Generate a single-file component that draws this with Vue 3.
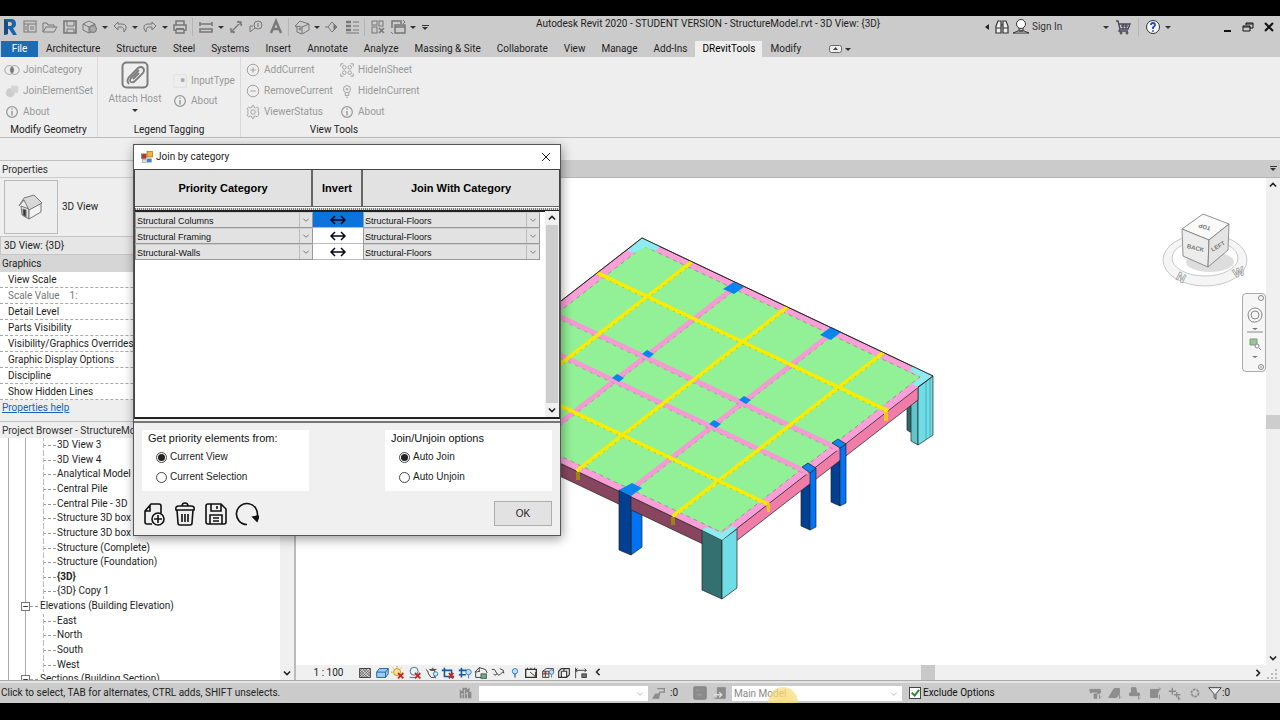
<script setup>
import { h, ref } from 'vue'

const art = {
  revit: '<path d="M3 1h7q5 0 5 5 0 3-3 4l4 7h-4l-4-6H7v5l-4 1z" fill="#1d63a8" stroke="none"/><path d="M7 4h2q2 0 2 2t-2 2H7z" fill="#cbcbcb" stroke="none"/><path d="M3 1l4 3v12l-4 1z" fill="#164b86" stroke="none"/>',
  home: '<rect x="3" y="3" width="12" height="11"/><path d="M3 6h12M7 6v8M9 9h4M9 11h4M5 8v4"/>',
  open: '<path d="M2 14V5h4l1 2h6v2M2 14l3-5h11l-3 5z"/>',
  save: '<path d="M3 3h12v12H3z" stroke-width="1.6"/><path d="M6 3v5h7V3M6 15v-4h7v4"/>',
  sync: '<path d="M2 6l6-3 6 3v6l-6 3-6-3zM2 6l6 3 6-3M8 9v6"/><circle cx="12" cy="11" r="3.5" fill="#aaa"/>',
  undo: '<path d="M7 4L3 8l4 4v-3h3q3 0 3 5 3-3 2-6-1-2-4-2H7z"/>',
  redo: '<path d="M11 4l4 4-4 4v-3H8q-3 0-3 5-3-3-2-6 1-2 4-2h4z"/>',
  print: '<path d="M5 7V3h8v4M3 12V7h12v5h-2v3H5v-3z" stroke-width="1.5"/><path d="M5 11h8" stroke-width="2"/>',
  measure: '<path d="M3 6h12M3 4v4M15 4v4M3 11h12v3H3z" stroke-width="1.6"/>',
  dim: '<path d="M4 14L14 4M3 11l4 4M11 3l4 4M10 4h4v4M4 10v4h4" stroke-width="1.3"/>',
  tag: '<circle cx="11" cy="7" r="4"/><path d="M11 5v4M3 14V8h3M3 14l5-4"/>',
  text: '<path d="M4 15L9 3l5 12M6 11h6" stroke-width="2.4"/>',
  house: '<path d="M2 8l5-5 9 3v6l-7 4-5-2V9zM9 9v7M2 8l7 1 7-3"/><circle cx="7" cy="11" r="1"/>',
  section: '<path d="M9 4l5 5-5 5-4-5z"/><path d="M11 6l3 3-3 3z" fill="#777"/><path d="M2 9h3"/>',
  thin: '<path d="M3 4h5M3 8h5M3 12h5" stroke-width="2.6"/><path d="M10 4h6M10 8h6M10 12h6M3 15h13"/>',
  close: '<rect x="3" y="3" width="5" height="4"/><rect x="10" y="3" width="4" height="5"/><rect x="3" y="9" width="5" height="6"/><path d="M10 10l5 5M15 10l-5 5" stroke-width="1.6"/>',
  switch: '<path d="M3 10V3h9v3M6 7h10v8H6zM6 9h10" stroke-width="1.5"/><path d="M14 2l2 2-2 2M4 16l-2-2"/>',
  joincat: '<circle cx="6" cy="9" r="5"/><circle cx="12" cy="9" r="5"/><path d="M9 5q4 4 0 8-4-4 0-8z" fill="#777" stroke="none"/>',
  joinset: '<circle cx="7" cy="11" r="5" fill="#ccc" stroke="none"/><rect x="8" y="3" width="8" height="8" fill="#d4d4d4" stroke="none"/>',
  info: '<circle cx="9" cy="9" r="6" stroke-width="1.4"/><path d="M9 8v5M9 5v1.500" stroke-width="1.6"/>',
  input: '<rect x="2" y="2" width="14" height="14" stroke="#ddd"/><rect x="10" y="6" width="4" height="4" fill="#aaa" stroke="none"/>',
  plus: '<circle cx="9" cy="9" r="6.500"/><path d="M9 6v6M6 9h6"/>',
  minus: '<circle cx="9" cy="9" r="6.500"/><path d="M6 9h6"/>',
  gear: '<circle cx="9" cy="9" r="2.500"/><path d="M8 2h2l.5 2 1.500.6L14 3.600 15.500 5l-1 2 .5 2 .5 2-.5 2-1.400 1.400-2-1-1.500.6L10 16H8l-.5-2L6 13.400l-2 1L2.500 13l1-2L3 9l.5-2-1-2L4 3.600l2 1L7.500 4z"/>',
  hide: '<circle cx="6" cy="6" r="2"/><circle cx="12" cy="6" r="2"/><circle cx="6" cy="12" r="2"/><circle cx="12" cy="12" r="2"/><path d="M2 5V2h3M13 2h3v3M2 13v3h3M13 16h3v-3"/>',
  bulb: '<circle cx="9" cy="7" r="4"/><circle cx="9" cy="7" r="1"/><path d="M7 11v3h4v-3M8 16h2"/>',
  search: '<path d="M3 15V8l2-5h3v12zM10 15V3h3l2 5v7zM8 7h2M3 10h5M10 10h5" stroke="#333" fill="#eee" stroke-width="1.200"/>',
  user: '<path d="M1 15l5-2h6l5 2z" fill="#eee"/><circle cx="9" cy="6" r="4.500" fill="#fff"/><path d="M7 10v3h4v-3"/>',
  cart: '<path d="M2 3h2l2 8h8l2-5H5M6 11l-1 2h9" fill="none" stroke="#4a4766" stroke-width="1.400"/><circle cx="7" cy="15" r="1"/><circle cx="13" cy="15" r="1"/><path d="M7 8h7M9 6v5M12 6v5"/>',
  help: '<circle cx="9" cy="9" r="6.500" fill="#f4f6fb"/><path d="M7 7q0-2 2-2t2 2q0 1-2 2.500V11M9 12.200v1.500" stroke="#2746b8" stroke-width="1.800"/>',
  vDetail: '<rect x="3" y="4" width="12" height="10" fill="#ddd"/><path d="M3 7l3-3M3 10l6-6M3 13l9-9M5 14L15 4M8 14l7-7M11 14l4-4M3 11l3 3M3 8l6 6M3 5l9 9M6 4l9 9M9 4l6 6" stroke-width=".6"/>',
  vStyle: '<path d="M3 8l3-4h10v6l-3 4H3z" fill="#9ccdf2" stroke="#175a9c"/><path d="M3 8h10v6M13 8l3-4" stroke="#175a9c"/>',
  vSun: '<circle cx="8" cy="8" r="4" fill="#ffe28a" stroke="#d08a10"/><path d="M8 1v2M1 8h2M3 3l1 1M13 3l-1 1" stroke="#d08a10"/><path d="M9 9l6 6M15 9l-6 6" stroke="#c8261c" stroke-width="2"/>',
  vShadow: '<circle cx="8" cy="7" r="4.500" fill="#e8f0fa" stroke="#39679c"/><path d="M3 14h7" stroke="#39679c"/><path d="M9 9l6 6M15 9l-6 6" stroke="#c8261c" stroke-width="2"/>',
  vRender: '<path d="M2 5q3 1 3 5l3 4h4V6H7M6 5h8M10 3v2"/><circle cx="13" cy="10" r="2.500" fill="#cfe8ff" stroke="#3277bb"/><path d="M13 13v2" stroke="#3277bb"/>',
  vCrop: '<path d="M5 3v10h11M2 6h11v9" stroke="#175a9c" stroke-width="1.800"/><path d="M10 9l5 6M15 9l-5 6" stroke="#c8261c" stroke-width="2"/>',
  vCropShow: '<path d="M5 3v11M2 6h9M2 11h8" stroke="#175a9c" stroke-width="1.800"/><circle cx="13" cy="8" r="3" fill="#bfe0ff" stroke="#3277bb"/><path d="M13 11v4" stroke="#3277bb"/>',
  vLock: '<path d="M2 8l5-5 7 2 2 4M3 8v6h6M7 3v4M3 8l5-1"/><rect x="9" y="10" width="6" height="5" fill="#79a884" stroke="#355d3e"/>',
  vGlasses: '<path d="M2 5h3l3 5q2 3 4 0 2-3 4-1M8 10q-3 3-4 0M11 4l4 2v3"/>',
  vReveal: '<circle cx="9" cy="7" r="3" fill="#bfe0ff" stroke="#3277bb"/><path d="M9 10v4" stroke="#3277bb" stroke-width="1.600"/>',
  vWork: '<path d="M3 5h12v9H3z" stroke-width="1.500"/><path d="M5 3v2M9 3v2M13 3v2M8 8l6 5M14 8v5"/>',
  vAnalysis: '<path d="M3 7l4-3h8v3M3 7v7h7V7zM6 7v7M3 10h7" /><path d="M3 14h7M4 9h4" stroke="#c8261c"/><circle cx="13" cy="8" r="2.500" fill="#bfe0ff" stroke="#3277bb"/><path d="M13 11v3" stroke="#3277bb"/>',
  vHigh: '<path d="M3 7l3-3h9v7l-3 3H3zM6 7h6v7M6 7v7M9 4v3" stroke-width="1.300"/>',
  vConstr: '<path d="M3 3v12M3 6h12M13 4l2 2-2 2M5 4L3 6l2 2"/><rect x="10" y="10" width="5" height="4" fill="#777"/>',
  sWork: '<path d="M3 15V7l3 2V4h3v4l3-3v10M6 15v-4M9 15v-5M14 15V8" stroke-width="2"/>',
  sEdit: '<path d="M7 4h8v4h-5l-1 4" stroke-width="1.500"/><path d="M2 15l3-5h4v5z" fill="#8e8e8e"/>',
  sSet: '<rect x="2" y="2" width="14" height="14" rx="1" fill="#8b8b8b" stroke="#808080"/><path d="M5 6h2M6 11h5" stroke="#aaa"/>',
  sOpt: '<path d="M6 3h9v12H6z" fill="#8b8b8b"/><path d="M2 11h9M8 8l3 3-3 3" stroke="#ddd" stroke-width="1.500"/><path d="M2 15h7"/>',
  f1: '<path d="M3 5h12v4l-3 1v-2H6L4 9zM8 10h3v5H8z" fill="#8e8e8e"/><path d="M14 11v4l2-2" />',
  f2: '<path d="M2 14L8 4h6v5l-3 5z" fill="#8e8e8e"/><path d="M14 10v5l2-2"/>',
  f3: '<path d="M5 3h5l1 6h3v3H3V9h2z" fill="#8e8e8e"/><path d="M13 12v4l2-2"/>',
  f4: '<path d="M4 5h10l-2 4v5H4z" fill="#8e8e8e"/><path d="M13 3l3 2M14 11v5"/>',
  f5: '<path d="M6 3v8M2 7h8M11 8v6M8 11h7M13 13v3l2-1" stroke-width="1.500"/>',
  f6: '<circle cx="9" cy="9" r="4" stroke-width="2" stroke-dasharray="3 1"/>',
  filter: '<path d="M2 3h14l-6 7v6l-2-2v-4z" fill="#eee" stroke="#333"/>',
  winform: '<rect x="2" y="5" width="6" height="6" fill="#b5382c" stroke="#8c6a66" stroke-width=".8"/><rect x="9" y="2" width="7" height="7" fill="#f2b62e" stroke="#8a6412" stroke-width=".8"/><rect x="9" y="11" width="6" height="5" fill="#4a80cf" stroke="none"/><rect x="3" y="12" width="5" height="4" fill="#ddd" stroke="#999" stroke-width=".8"/>',
  chev: '<path d="M5 7l4 4 4-4"/>',
  arrow: '<path d="M5 7l4 4 4-4" stroke-width="2"/>',
  x: '<path d="M3 3l12 12M15 3L3 15" stroke-width="1.500"/>'
}
const Icon = (p) => h('svg', { viewBox: '0 0 18 18', width: p.size || 18, height: p.size || 18, class: 'ic', 'aria-hidden': 'true', innerHTML: art[p.name] })
Icon.props = ['name', 'size']

const quick = ['revit', 'home', 'open', 'save', 'sync', '▾', 'undo', '▾', 'redo', '▾', 'print', '|', 'measure', '▾', 'dim', 'tag', 'text', '|', 'house', '▾', 'section', 'thin', '|', 'close', 'switch', '▾']
const tabs = ['Architecture', 'Structure', 'Steel', 'Systems', 'Insert', 'Annotate', 'Analyze', 'Massing & Site', 'Collaborate', 'View', 'Manage', 'Add-Ins', 'DRevitTools', 'Modify']
const viewTools = [['plus', 'AddCurrent'], ['hide', 'HideInSheet'], ['minus', 'RemoveCurrent'], ['bulb', 'HideInCurrent'], ['gear', 'ViewerStatus'], ['info', 'About']]
const properties = ['View Scale', 'Scale Value    1:', 'Detail Level', 'Parts Visibility', 'Visibility/Graphics Overrides', 'Graphic Display Options', 'Discipline', 'Show Hidden Lines']
const tree = ['3D View 3', '3D View 4', 'Analytical Model', 'Central Pile', 'Central Pile - 3D', 'Structure 3D box', 'Structure 3D box Wall', 'Structure (Complete)', 'Structure (Foundation)', '{3D}', '{3D} Copy 1', '-Elevations (Building Elevation)', 'East', 'North', 'South', 'West', '-Sections (Building Section)']
const viewIcons = ['vDetail', 'vStyle', 'vSun', 'vShadow', 'vRender', 'vCrop', 'vCropShow', 'vLock', 'vGlasses', 'vReveal', 'vWork', 'vAnalysis', 'vHigh', 'vConstr']
const pairs = [['Structural Columns', 'Structural-Floors'], ['Structural Framing', 'Structural-Floors'], ['Structural-Walls', 'Structural-Floors']]
const source = ref('view')
const mode = ref('join')

// Slab plane: u runs from the back corner to the right one, v from the back corner to the left one.
const at = (u, v) => [642 + 291 * u - 211 * v, 238 + 138 * u + 164 * v]
const poly = (...uv) => uv.map(([u, v]) => at(u, v).map(Math.round).join(',')).join(' ')
const alongU = (v) => ({ a: at(0, v), b: at(1, v) })
const alongV = (u) => ({ a: at(u, 0), b: at(u, 1) })
const slab = poly([0, 0], [1, 0], [1, 1], [0, 1])
const panel = poly([0.026, 0.028], [0.976, 0.028], [0.976, 0.972], [0.026, 0.972])
const girders = [alongV(0.333), alongV(0.667), alongU(0.445), alongU(0.59)]
const joists = [alongV(0.172), alongV(0.5), alongV(0.83), alongU(0.213), alongU(0.782)]
const nodes = [[648, 354], [618, 378], [745, 400], [715, 424]]
</script>

<template>
  <div class="app">
    <header class="titlebar">
      <div class="quick">
        <template v-for="(q, i) in quick" :key="i">
          <span v-if="q === '▾'" class="caret"></span>
          <span v-else-if="q === '|'" class="sep"></span>
          <button v-else class="slot" :aria-label="q"><Icon :name="q" /></button>
        </template>
        <span class="caret more"></span>
      </div>
      <div class="title">Autodesk Revit 2020 - STUDENT VERSION - StructureModel.rvt - 3D View: {3D}</div>
      <div class="account">
        <span class="caret-left"></span>
        <button class="slot" aria-label="Search"><Icon name="search" /></button>
        <button class="signin"><Icon name="user" />Sign In</button>
        <span class="caret"></span>
        <button class="slot cart" aria-label="App store"><Icon name="cart" /></button>
        <span class="sep wide"></span>
        <button class="slot" aria-label="Help"><Icon name="help" /></button>
        <span class="caret"></span>
      </div>
      <div class="winbtns">
        <button aria-label="Minimize"><svg width="12" height="12"><path d="M3 10h7" stroke="#111" stroke-width="2" /></svg></button>
        <button aria-label="Restore"><svg width="12" height="12" fill="none" stroke="#111"><path d="M4 4V2h7v5H8M1 5h7v5H1zM1 6h7M4 3h7" /></svg></button>
        <button aria-label="Close"><svg width="12" height="12"><path d="M2 2l8 8M10 2l-8 8" stroke="#111" stroke-width="2" /></svg></button>
      </div>
    </header>

    <nav class="tabs">
      <button class="file">File</button>
      <button v-for="t in tabs" :key="t" :class="{ on: t === 'DRevitTools' }">{{ t }}</button>
      <span class="toggle"><svg width="14" height="9"><rect x=".5" y=".5" width="12" height="7" rx="2" fill="#eee" stroke="#666" /><path d="M4 5l2.500-3L9 5z" fill="#444" /></svg></span>
      <span class="caret"></span>
    </nav>

    <section class="ribbon">
      <div class="group modify">
        <div class="rows">
          <button><Icon name="joincat" size="16" />JoinCategory</button>
          <button><Icon name="joinset" size="16" />JoinElementSet</button>
          <button><Icon name="info" size="16" />About</button>
        </div>
        <h2>Modify Geometry</h2>
      </div>
      <div class="group legend">
        <div class="pair">
          <button class="attach">
            <svg width="28" height="28" viewBox="0 0 28 28" fill="none" stroke="#7d7d7d"><rect x="1.500" y="1.500" width="25" height="25" rx="4" stroke-width="2" /><path d="M18 9l-8 8q-2 3 0 4t4-1l8-8q2-3 0-5t-5 0l-9 9q-3 4 0 7M12 18l6-6" stroke-width="1.800" /></svg>
            <span>Attach Host</span><i class="caret"></i>
          </button>
          <div class="rows two">
            <button><Icon name="input" size="16" />InputType</button>
            <button><Icon name="info" size="16" />About</button>
          </div>
        </div>
        <h2>Legend Tagging</h2>
      </div>
      <div class="group viewtools">
        <div class="rows cols">
          <button v-for="[ic, t] in viewTools" :key="t"><Icon :name="ic" size="16" />{{ t }}</button>
        </div>
        <h2>View Tools</h2>
      </div>
    </section>
    <div class="optionbar"></div>

    <main class="work">
      <aside class="side">
        <h3 class="ptitle">Properties</h3>
        <div class="type">
          <div class="thumb">
            <svg width="28" height="28" viewBox="0 0 28 28" stroke="#777" stroke-linejoin="round"><path d="M4 13l8 3v10l-7-4z" fill="#ddd" /><path d="M12 16l12-6v9l-12 7z" fill="#f2f2f2" /><path d="M2 13L7 5l10-3 8 8-13 7L7 7z" fill="#d8d8d8" /><path d="M6 16l3 1v7l-3-2z" fill="#333" /></svg>
          </div>
          <span>3D View</span>
        </div>
        <div class="instance">3D View: {3D}</div>
        <div class="cat">Graphics</div>
        <ul class="props">
          <li v-for="(p, i) in properties" :key="p" :class="{ dim: i === 1 }">{{ p }}</li>
        </ul>
        <a class="phelp" href="#help">Properties help</a>
        <h3 class="ptitle browser">Project Browser - StructureModel.rvt</h3>
        <div class="treebox">
          <ul class="tree">
            <li v-for="t in tree" :key="t" :class="{ parent: t[0] === '-', bold: t === '{3D}' }"><span>{{ t.replace(/^-/, '') }}</span></li>
          </ul>
          <div class="vscroll"><Icon name="arrow" size="14" /></div>
        </div>
      </aside>

      <section class="view">
        <div class="viewtabs"><span class="caret more"></span></div>
        <div class="canvasrow">
          <div class="canvas">
            <svg class="model" viewBox="296 178 970 487" preserveAspectRatio="xMidYMid meet">
              <g stroke="#222" stroke-width=".7" stroke-linejoin="round">
                <path d="M907 400h11v32h-8l-3-2z" fill="#2d686c" />
                <path d="M911 404l7-4v45l-7-4z" fill="#5fc4cc" />
                <path d="M918 386l15-10v59l-15 10z" fill="#6fdde6" />
                <path d="M926 381v58M930 378v58" stroke="#3d9aa6" />
                <path d="M831 440h9v66l-9-4z" fill="#004094" />
                <path d="M801 470h9v60l-9-4z" fill="#004094" />
                <path d="M631 500h11v47l-11 8z" fill="#0072f5" />
                <path d="M431 402L722 540v13L431 415z" fill="#874560" />
                <path d="M722 540L918 387v13L722 552z" fill="#ef7da8" />
                <polygon :points="slab" fill="#fa9fd8" />
              </g>
              <polygon :points="panel" fill="#92f096" stroke="#527a55" stroke-width=".5" stroke-dasharray="4 4" />
              <g v-for="(g, i) in girders" :key="'g' + i">
                <line :x1="g.a[0]" :y1="g.a[1]" :x2="g.b[0]" :y2="g.b[1]" stroke="#f49bd3" stroke-width="5" />
                <line :x1="g.a[0]" :y1="g.a[1] + 3" :x2="g.b[0]" :y2="g.b[1] + 3" stroke="#96718c" stroke-width=".5" stroke-dasharray="3 5" />
              </g>
              <g v-for="(g, i) in joists" :key="'j' + i">
                <line :x1="g.a[0]" :y1="g.a[1]" :x2="g.b[0]" :y2="g.b[1]" stroke="#f6ec08" stroke-width="4" />
                <line :x1="g.a[0]" :y1="g.a[1] + 2" :x2="g.b[0]" :y2="g.b[1] + 2" stroke="#8a8414" stroke-width=".4" stroke-dasharray="2 5" />
              </g>
              <path d="M576 472h4v8h-4zM671 517h4v8h-4z" fill="#9a8418" />
              <path d="M767 503h3v9h-3zM884 412h4v9h-4z" fill="#f0c51c" />
              <path v-for="n in nodes" :key="n[0]" :d="`M${n[0] - 6} ${n[1]}l5 -4 7 4 -5 4z`" fill="#0b85ee" />
              <path d="M723 289l11-7 10 5-10 7zM820 335l11-8 10 5-10 8z" fill="#0b85ee" />
              <path d="M642 238l18 8-4 5-11-4-10 6-8-2zM913 366l20 10-15 11-6-3 9-7-11-6z" fill="#8cecf0" />
              <g stroke="#222" stroke-width=".7" stroke-linejoin="round">
                <path d="M840 448l6-4v59l-6 3z" fill="#0075fa" />
                <path d="M832 443l6-4 8 5-6 4z" fill="#0b85ee" />
                <path d="M810 473l6-5v59l-6 3z" fill="#0075fa" />
                <path d="M802 467l6-4 8 5-6 5z" fill="#0b85ee" />
                <path d="M619 490l12 6v59l-12-5z" fill="#003f92" />
                <path d="M702 530l20 10v59l-20-9z" fill="#34706f" />
                <path d="M722 540l15-11v59l-15 11z" fill="#6fdde6" />
              </g>
              <path d="M619 490l13-7 10 5-11 8z" fill="#0b85ee" />
              <path d="M702 530l5-3 15 6 10-7 5 2-15 12z" fill="#8cecf0" />
              <path d="M642 238L933 376L918 387M642 238L431 402" fill="none" stroke="#222" stroke-width=".9" />
            </svg>
            <svg class="cube" width="88" height="80" viewBox="1161 210 88 80" stroke="#777" stroke-width=".8">
              <path d="M1163 260a42 26 0 1 0 84 0a42 26 0 1 0-84 0zM1172 258a33 18 0 1 1 66 0a33 18 0 1 1-66 0z" fill="#f5f5f5" fill-rule="evenodd" stroke="#bbb" />
              <ellipse cx="1210" cy="262" rx="24" ry="10" fill="#ddd" stroke="none" />
              <path d="M1203 214l26 10-20 16-27-11z" fill="#fafafa" /><path d="M1182 229l27 11-1 27-25-11z" fill="#ececec" /><path d="M1209 240l20-16-1 26-20 17z" fill="#e4e4e4" />
              <g stroke="none" fill="#777" font-family="Liberation Sans, sans-serif" font-size="6" font-weight="bold" text-anchor="middle">
                <text transform="translate(1195 250) rotate(14)">BACK</text>
                <text transform="translate(1219 248) rotate(-30)">LEFT</text>
                <text transform="translate(1205 225) rotate(195)">TOP</text>
                <g font-size="12" fill="#fff" stroke="#999" stroke-width=".7"><text transform="translate(1179 281) rotate(28)">N</text><text transform="translate(1240 276) rotate(-20)">W</text></g>
              </g>
            </svg>
            <div class="navbar">
              <svg width="22" height="78" fill="none" stroke="#888"><circle cx="18" cy="4" r="2.500" /><circle cx="18" cy="73" r="2.500" /><path d="M17 73h2M4 38h16" /><path d="M5 21a7 7 0 1 1 7 7H9q-4-2-4-7z" /><circle cx="12" cy="21" r="4" /><path d="M9 34h6l-3 2zM9 62h6l-3 2z" fill="#777" stroke="none" /><path d="M7 45h7v6H7z" fill="#9cc39a" stroke="#799c77" /><circle cx="14" cy="52" r="2" fill="#fff" /><path d="M16 54l2 2" /></svg>
            </div>
          </div>
          <div class="vscroll right"><Icon class="up" name="arrow" size="14" /><i></i><Icon name="arrow" size="14" /></div>
        </div>
        <div class="viewbar">
          <span class="scale">1 : 100</span>
          <div class="vicons">
            <button v-for="v in viewIcons" :key="v" :aria-label="v"><Icon :name="v" size="16" /></button>
            <span class="lt"><Icon name="arrow" size="14" /></span>
          </div>
          <div class="hscroll"><i></i><Icon name="arrow" size="14" /></div>
          <svg class="grip" width="14" height="12" fill="#bbb"><path d="M9 1h2v2H9zM9 5h2v2H9zM9 9h2v2H9zM5 5h2v2H5zM5 9h2v2H5zM1 9h2v2H1z" /></svg>
        </div>
      </section>
    </main>

    <footer class="status">
      <span class="hint">Click to select, TAB for alternates, CTRL adds, SHIFT unselects.</span>
      <Icon name="sWork" size="16" />
      <span class="drop worksets"><select aria-label="Workset"><option></option></select><Icon name="chev" size="12" /></span>
      <Icon name="sEdit" size="16" /><span class="count">:0</span>
      <Icon name="sSet" size="16" /><Icon class="gap" name="sOpt" size="16" />
      <span class="drop model-opt"><select aria-label="Design option"><option>Main Model</option></select><Icon name="chev" size="12" /></span>
      <label class="exclude"><input type="checkbox" checked />Exclude Options</label>
      <span class="filters">
        <Icon v-for="f in ['f1', 'f2', 'f3', 'f4', 'f5', 'f6', 'filter']" :key="f" :name="f" size="16" /><span>:0</span>
      </span>
      <i class="halo"></i>
    </footer>

    <div class="dialog" role="dialog" aria-labelledby="dlg">
      <div class="dhead"><Icon name="winform" size="14" /><span id="dlg">Join by category</span><button aria-label="Close dialog"><Icon name="x" size="12" /></button></div>
      <div class="gridbox">
        <table>
          <colgroup><col class="c1" /><col class="c2" /><col /></colgroup>
          <thead><tr><th>Priority Category</th><th>Invert</th><th>Join With Category</th></tr></thead>
          <tbody>
            <tr class="rule"><td colspan="3"></td></tr>
            <tr v-for="(p, i) in pairs" :key="i">
              <td><span class="combo"><select :aria-label="'Priority category ' + (i + 1)"><option>{{ p[0] }}</option></select><Icon name="chev" size="12" /></span></td>
              <td><button class="invert" :class="{ on: i === 0 }" aria-label="Invert"><svg width="16" height="10" fill="none" stroke="#05051a" stroke-width="1.500"><path d="M1 5h14M5 1L1 5l4 4M11 1l4 4-4 4" /></svg></button></td>
              <td class="last"><span class="combo"><select :aria-label="'Join with category ' + (i + 1)"><option>{{ p[1] }}</option></select><Icon name="chev" size="12" /></span></td>
            </tr>
          </tbody>
        </table>
        <div class="dscroll"><Icon class="up" name="arrow" size="14" /><i></i><Icon name="arrow" size="14" /></div>
      </div>
      <div class="dbody">
        <div class="boxes">
          <fieldset>
            <legend>Get priority elements from:</legend>
            <label><input v-model="source" type="radio" name="source" value="view" />Current View</label>
            <label><input v-model="source" type="radio" name="source" value="sel" />Current Selection</label>
          </fieldset>
          <fieldset>
            <legend>Join/Unjoin options</legend>
            <label><input v-model="mode" type="radio" name="mode" value="join" />Auto Join</label>
            <label><input v-model="mode" type="radio" name="mode" value="unjoin" />Auto Unjoin</label>
          </fieldset>
        </div>
        <div class="actions">
          <button aria-label="Add"><svg viewBox="0 0 24 24"><path d="M10 22H5q-2 0-2-2V9l6-7h8q2 0 2 2v7M3 9h5V3" /><circle cx="16" cy="17" r="6" /><path d="M16 13v8M12 17h8" /></svg></button>
          <button aria-label="Delete"><svg viewBox="0 0 24 24"><path d="M4 8l1 13q0 2 2 2h10q2 0 2-2l1-13M3 8q-1-4 3-4h12q4 0 3 4zM9 4q0-3 3-3t3 3M9 12v8M12 12v8M15 12v8" /></svg></button>
          <button aria-label="Save"><svg viewBox="0 0 24 24"><path d="M4 2h13l5 5v13q0 2-2 2H4q-2 0-2-2V4q0-2 2-2zM7 2v7h10V2M13 4v3M6 22v-9h12v9M9 16h6M9 19h6" /></svg></button>
          <button aria-label="Reload"><svg viewBox="0 0 24 24"><path d="M12 22.500A10.500 10.500 0 1 1 22 15" /><path d="M18 15l6-1-2 5z" fill="#111" /></svg></button>
          <button class="ok">OK</button>
        </div>
      </div>
    </div>
  </div>
</template>

<style>
body { background: #000; }
.ic { display: block; flex: none; fill: none; stroke: currentColor; }
</style>

<style scoped>
.app { position: relative; box-sizing: border-box; min-height: 100vh; display: flex; flex-direction: column; padding: 16px 0 17px; background: #000; color: #1e1e1e; font: 10px/16px Roboto, "Open Sans", sans-serif; overflow: hidden; }
button { border: 0; padding: 0; background: none; font: inherit; color: inherit; display: flex; align-items: center; justify-content: center; }
select, input { font: inherit; margin: 0; }
ul { list-style: none; margin: 0; padding: 0; }
h2, h3 { margin: 0; font: inherit; }

.titlebar { display: flex; align-items: center; height: 25px; padding-bottom: 3px; box-sizing: border-box; background: #cbcbcb; }
.quick { display: flex; align-items: center; width: 536px; height: 21px; color: #777; }
.slot { width: 20px; height: 20px; flex: none; }
.caret { width: 10px; flex: none; display: flex; justify-content: center; }
.caret::before { content: ""; border: 3px solid transparent; border-top: 3px solid #333; border-bottom: 0; }
.caret.more { flex-direction: column; align-items: center; gap: 1px; margin-left: 2px; }
.caret.more::after { content: ""; order: -1; width: 7px; height: 1px; background: #333; }
.sep { width: 1px; height: 18px; margin: 0 3px 0 2px; background: #b5b5b5; flex: none; }
.sep.wide { margin: 0 4px 0 5px; }
.title { flex: 1; white-space: nowrap; line-height: 16px; align-self: flex-start; }
.account { display: flex; align-items: center; width: 236px; color: #333; }
.caret-left { border: 3px solid transparent; border-right: 4px solid #222; border-left: 0; margin-right: 3px; }
.signin { width: 89px; gap: 2px; justify-content: flex-start; }
.cart { margin-left: 2px; }
.winbtns { display: flex; gap: 9px; width: 59px; }

.tabs { display: flex; height: 16px; align-items: stretch; background: #cbcbcb; line-height: 16px; }
.tabs button { padding: 0 8px; white-space: nowrap; }
.tabs .file { width: 38px; background: #1a6cb4; color: #fff; border-left: 1px solid #cbcbcb; }
.tabs .on { background: #eee; color: #000; padding: 0 7px; }
.toggle { margin-left: 20px; display: flex; align-items: center; }
.tabs .caret { align-items: center; }

.ribbon { display: flex; height: 80px; background: #eee; border-bottom: 1px solid #bbb; }
.group { display: flex; flex-direction: column; border-right: 1px solid #dadada; box-sizing: border-box; }
.group h2 { text-align: center; height: 15px; line-height: 15px; color: #222; }
.rows { display: flex; flex-direction: column; flex: 1; padding-top: 3px; color: #999; }
.rows button { height: 20px; justify-content: flex-start; gap: 3px; white-space: nowrap; }
.modify { width: 98px; }
.modify .rows { padding-left: 4px; gap: 1px; }
.legend { width: 143px; }
.pair { display: flex; flex: 1; }
.attach { width: 74px; flex-direction: column; justify-content: flex-start; padding-top: 4px; color: #999; }
.attach span { line-height: 20px; }
.two { padding-top: 14px; }
.viewtools { width: 186px; border: 0; }
.cols { display: grid; grid-template-columns: 94px 1fr; grid-auto-rows: 20px; row-gap: 1px; padding-left: 4px; }
.optionbar { height: 22px; background: #eee; flex: none; }

.work { flex: 1; display: grid; grid-template-columns: 296px minmax(0, 1fr); border-bottom: 1px solid #aaa; }
.side { display: flex; flex-direction: column; min-height: 0; background: #eee; border-right: 2px solid #bbb; box-sizing: border-box; white-space: pre; }
.ptitle { height: 14px; padding: 2px 2px 0; line-height: 14px; color: #333; border-top: 1px solid #c0c0c0; }
.type { display: flex; align-items: center; gap: 4px; height: 58px; border-top: 1px solid #ccc; padding-left: 4px; }
.thumb { width: 52px; height: 52px; border: 1px solid #bbb; display: flex; align-items: center; justify-content: center; }
.instance { height: 17px; line-height: 17px; border: 1px solid #c5c5c5; padding-left: 3px; background: #e6e6e6; }
.cat { height: 17px; line-height: 17px; padding-left: 2px; background: #d6d6d6; }
.props { background: #fff; }
.props li { height: 15px; line-height: 15px; padding-left: 8px; border-bottom: 1px dashed #aaa; }
.props .dim { color: #777; }
.phelp { color: #1565c0; padding-left: 2px; height: 21px; line-height: 15px; }
.treebox { flex: 1 1 0; min-height: 200px; display: flex; background: #fff; overflow: hidden; position: relative; }
.tree { flex: 1; height: 249px; display: grid; grid-auto-rows: 1fr; background: linear-gradient(90deg, transparent 8px, #aaa 8px, #aaa 9px, transparent 9px, transparent 25px, #aaa 25px, #aaa 26px, transparent 26px); }
.tree li { position: relative; padding-left: 57px; line-height: 14px; }
.tree li::before { content: ""; position: absolute; left: 43px; top: 0; width: 12px; height: 7px; border-left: 1px dashed #bbb; border-bottom: 1px dashed #999; }
.tree li:not(.parent)::after { content: ""; position: absolute; left: 43px; top: 7px; bottom: 0; border-left: 1px dashed #bbb; }
.tree .parent { padding-left: 40px; }
.tree .parent::before { left: 30px; width: 8px; border-left: 0; }
.tree .parent::after { content: "–"; position: absolute; left: 21px; top: 3px; width: 7px; height: 7px; line-height: 7px; text-align: center; border: 1px solid #777; background: #fff; }
.bold { font-weight: bold; }
.vscroll { width: 14px; background: #f0f0f0; display: flex; flex-direction: column; justify-content: flex-end; color: #222; }

.view { display: flex; flex-direction: column; background: #fff; min-width: 0; }
.viewtabs { height: 17px; background: #cbcbcb; border-bottom: 1px solid #b5b5b5; display: flex; justify-content: flex-end; align-items: center; padding-right: 2px; }
.canvasrow { flex: 1; display: flex; min-height: 0; }
.canvas { flex: 1; position: relative; min-width: 0; min-height: 400px; }
.model { position: absolute; inset: 0; width: 100%; height: 100%; }
.cube { position: absolute; right: 17px; top: 32px; }
.navbar { position: absolute; right: 0; top: 115px; width: 22px; height: 77px; border: 1px solid #aaa; border-radius: 4px; background: #f6f6f6; }
.right { justify-content: space-between; position: relative; }
.up { transform: rotate(180deg); }
.right i { position: absolute; left: 0; right: 0; top: 237px; height: 14px; background: #cdcdcd; }
.viewbar { height: 15px; display: flex; align-items: center; background: #f0f0f0; }
.scale { width: 61px; text-align: center; box-sizing: border-box; padding-left: 4px; }
.vicons { display: flex; width: 249px; color: #333; }
.vicons > * { flex: 1; display: flex; justify-content: center; }
.lt .ic { transform: rotate(90deg); }
.hscroll { flex: 1; align-self: stretch; display: flex; align-items: center; justify-content: flex-end; position: relative; padding-right: 1px; color: #222; }
.hscroll .ic { transform: rotate(-90deg); }
.hscroll i { position: absolute; right: 331px; width: 14px; top: 0; bottom: 0; background: #c8c8c8; }
.grip { align-self: flex-end; }

.status { position: relative; height: 20px; border-top: 2px solid #e4e4e4; background: #cbcbcb; display: flex; align-items: center; color: #222; overflow: hidden; }
.status > .ic, .filters { color: #8a8a8a; }
.hint { width: 457px; padding-left: 1px; white-space: nowrap; }
.drop { position: relative; display: flex; }
.drop select { appearance: none; width: 100%; height: 15px; padding: 0 2px; border: 0; border-radius: 0; background: #fff; color: #888; }
.drop .ic { position: absolute; right: 2px; top: 2px; color: #999; }
.worksets { width: 169px; margin: 0 3px 0 5px; }
.count { width: 25px; padding-left: 3px; box-sizing: border-box; }
.gap { margin-left: 4px; }
.model-opt { width: 170px; margin-left: 4px; }
.exclude { display: flex; align-items: center; gap: 2px; margin-left: 7px; color: #111; }
.exclude input { appearance: none; width: 12px; height: 12px; border: 1px solid #444; background: #fff; display: grid; place-items: center; }
.exclude input:checked::before { content: ""; width: 3px; height: 6px; border: solid #2f8a34; border-width: 0 2px 2px 0; transform: rotate(40deg); margin-top: -2px; }
.filters { display: flex; gap: 4px; margin-left: auto; margin-right: 50px; align-items: center; }
.filters span { color: #222; margin-left: -5px; }
.halo { position: absolute; left: 768px; top: 4px; width: 30px; height: 30px; border-radius: 50%; background: radial-gradient(rgba(250, 220, 110, .9), rgba(240, 220, 130, .55)); }

.dialog { position: absolute; left: 133px; top: 144px; width: 428px; box-sizing: border-box; background: #f0f0f0; border: 1px solid #555; box-shadow: 1px 3px 10px rgba(0, 0, 0, .4); }
.dhead { display: flex; align-items: center; gap: 2px; height: 24px; padding: 0 8px 0 6px; background: #fff; color: #222; }
.dhead button { margin-left: auto; color: #222; }
.gridbox { position: relative; height: 247px; background: #fff; border: 1px solid #444; border-bottom: 2px solid #222; }
table { width: 100%; border-spacing: 0; table-layout: fixed; font-family: "Liberation Sans", Arial, sans-serif; color: #111; }
.c1 { width: 178px; } .c2 { width: 50px; }
th { height: 37px; padding: 0; box-sizing: border-box; background: #e2e2e2; border-right: 2px solid #666; border-bottom: 1px solid #666; font-size: 11px; color: #000; }
th:last-child { border-right: 0; }
td { padding: 0; }
.rule td { height: 2px; border-top: 1px solid #fff; border-bottom: 2px solid #222; background: repeating-linear-gradient(90deg, #777 0 1px, #ddd 1px 2px); }
.last { padding-right: 19px; }
.combo { position: relative; display: flex; }
.combo select { appearance: none; width: 100%; height: 16px; padding: 0 1px; border: 1px solid #999; border-radius: 0; border-top-color: #ccc; background: #e2e2e2; color: #111; font-size: 9px; }
.combo .ic { position: absolute; right: 1px; top: 1px; height: 14px; color: #444; border-left: 1px solid #bbb; }
.invert { width: 100%; height: 16px; border-bottom: 1px solid #bbb; background: #fff; }
.invert.on { background: #0a74dc; }
.dscroll { position: absolute; right: 0; top: 41px; bottom: 0; width: 14px; background: #f0f0f0; display: flex; flex-direction: column; align-items: center; color: #222; }
.dscroll i { flex: 1; width: 12px; background: #cdcdcd; }
.dbody { margin-top: 2px; border-top: 2px solid #777; padding: 7px 8px 9px; font-family: "Liberation Sans", Arial, sans-serif; color: #222; }
.boxes { display: flex; justify-content: space-between; }
fieldset { position: relative; width: 167px; height: 61px; box-sizing: border-box; margin: 0; padding: 19px 0 0 14px; border: 0; background: #fff; min-width: 0; }
legend { position: absolute; left: 6px; top: 0; padding: 0; font-size: 11px; line-height: 16px; color: #111; white-space: nowrap; }
fieldset label { display: flex; align-items: center; gap: 3px; height: 16px; margin-bottom: 4px; }
fieldset input { appearance: none; width: 11px; height: 11px; border: 1px solid #444; border-radius: 50%; background: #fff; display: grid; place-items: center; }
fieldset input:checked::before { content: ""; width: 7px; height: 7px; border-radius: 50%; background: #222; }
.actions { display: flex; align-items: center; gap: 7px; padding-top: 10px; }
.actions svg { width: 24px; height: 24px; fill: none; stroke: #111; stroke-width: 1.6; }
.actions .ok { margin-left: auto; width: 58px; height: 25px; border: 1px solid #adadad; background: #e2e2e2; }
</style>
